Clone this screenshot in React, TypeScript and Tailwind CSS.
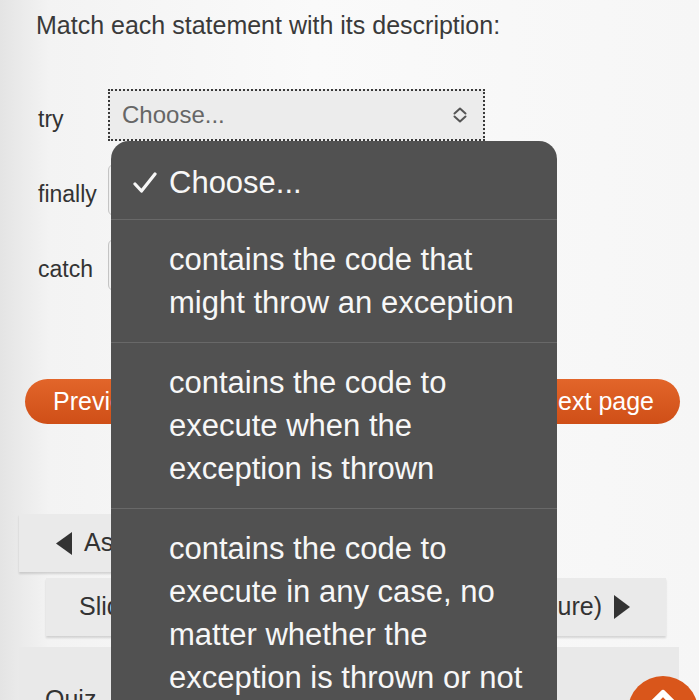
import React from "react";

const font = { fontFamily: '"Liberation Sans", Arial, sans-serif' };

function Chevrons() {
  return (
    <svg width="18" height="18" viewBox="0 0 18 18" className="shrink-0">
      <path d="M3.5 7.5 L9 2.5 L14.5 7.5" fill="none" stroke="#555" strokeWidth="2" strokeLinecap="round" strokeLinejoin="round" />
      <path d="M3.5 10.5 L9 15.5 L14.5 10.5" fill="none" stroke="#555" strokeWidth="2" strokeLinecap="round" strokeLinejoin="round" />
    </svg>
  );
}

function Row({ label, focused }: { label: string; focused?: boolean }) {
  return (
    <div className="flex items-center">
      <div className="w-[70px] mt-[9px] text-[23px] text-[#333]">{label}</div>
      <div
        className={
          focused
            ? "w-[377px] h-[52px] flex items-center justify-between pl-[12px] pr-[14px] bg-[#ececec] border-2 border-dotted border-[#3a3a3a]"
            : "w-[377px] h-[52px] flex items-center justify-between pl-[14px] pr-[14px] bg-[#efefef] border border-[#c4c4c4] rounded-[6px]"
        }
      >
        <span className="text-[24px] text-[#666]">Choose...</span>
        <Chevrons />
      </div>
    </div>
  );
}

const options = [
  "contains the code that might throw an exception",
  "contains the code to execute when the exception is thrown",
  "contains the code to execute in any case, no matter whether the exception is thrown or not",
];

export default function App() {
  return (
    <div
      className="relative w-[699px] h-[700px] overflow-hidden bg-[linear-gradient(90deg,#e4e4e4_0%,#f3f3f3_7%,#fafafa_45%,#f6f6f6_100%)]"
      style={font}
    >
      <div className="pt-[10px] pl-[36px] text-[25px] leading-[30px] text-[#3a3a3a]">
        Match each statement with its description:
      </div>

      <div className="mt-[49px] pl-[38px] flex flex-col gap-[23px]">
        <Row label="try" focused />
        <Row label="finally" />
        <Row label="catch" />
      </div>

      <div className="mt-[88px] pl-[25px] pr-[19px] flex justify-between">
        <div className="h-[45px] px-[28px] flex items-center rounded-full bg-[linear-gradient(180deg,#e2652a,#cf4f17)] text-white text-[25px]">
          Previous page
        </div>
        <div className="h-[45px] px-[26px] flex items-center rounded-full bg-[linear-gradient(180deg,#e2652a,#cf4f17)] text-white text-[25px]">
          Next page
        </div>
      </div>

      <div className="mt-[90px] pl-[19px]">
        <div className="w-[480px] h-[58px] flex items-center gap-[12px] pl-[37px] bg-[#eaeaea] shadow-[0_2px_2px_rgba(0,0,0,0.14)] text-[25px] text-[#333]">
          <svg width="16" height="23" viewBox="0 0 16 23">
            <polygon points="16,0 16,23 0,11.5" fill="#333" />
          </svg>
          <span>Assignment 3</span>
        </div>
      </div>

      <div className="mt-[6px] pl-[46px]">
        <div className="w-[620px] h-[58px] flex items-center pl-[33px] pr-[36px] bg-[#eaeaea] shadow-[0_2px_2px_rgba(0,0,0,0.14)] text-[25px] text-[#333]">
          <span>Slides</span>
          <span className="ml-auto flex items-center gap-[12px]">
            (exception procedure)
            <svg width="16" height="24" viewBox="0 0 16 24">
              <polygon points="0,0 0,24 16,12" fill="#333" />
            </svg>
          </span>
        </div>
      </div>

      <div className="mt-[11px] pl-[19px]">
        <div className="w-[660px] h-[90px] pl-[26px] pt-[37px] bg-[#e9e9e9] text-[25px] leading-[30px] text-[#333]">
          Quiz
        </div>
      </div>

      <div className="absolute left-[628px] top-[676px] w-[70px] h-[70px] rounded-full bg-[#d9561b] flex justify-center">
        <svg width="30" height="20" viewBox="0 0 30 20" className="mt-[12px]">
          <path d="M4 16 L15 5 L26 16" fill="none" stroke="white" strokeWidth="6" strokeLinecap="round" strokeLinejoin="round" />
        </svg>
      </div>

      <div className="absolute left-[111px] top-[141px] w-[446px] h-[620px] rounded-[18px] bg-[#515151] text-[31px] leading-[43px] text-[#f7f7f7]">
        <div className="relative pt-[20px] pb-[15px] pl-[58px] pr-[18px]">
          <svg width="24" height="22" viewBox="0 0 24 22" className="absolute left-[22px] top-[31px]">
            <path d="M2 12 L8.5 19 L22 2" fill="none" stroke="#f7f7f7" strokeWidth="3.2" strokeLinecap="round" strokeLinejoin="round" />
          </svg>
          Choose...
        </div>
        {options.map((o) => (
          <div key={o} className="border-t border-[#686868] pt-[18px] pb-[18px] pl-[58px] pr-[18px]">
            <div className="w-[370px]">{o}</div>
          </div>
        ))}
      </div>
    </div>
  );
}
